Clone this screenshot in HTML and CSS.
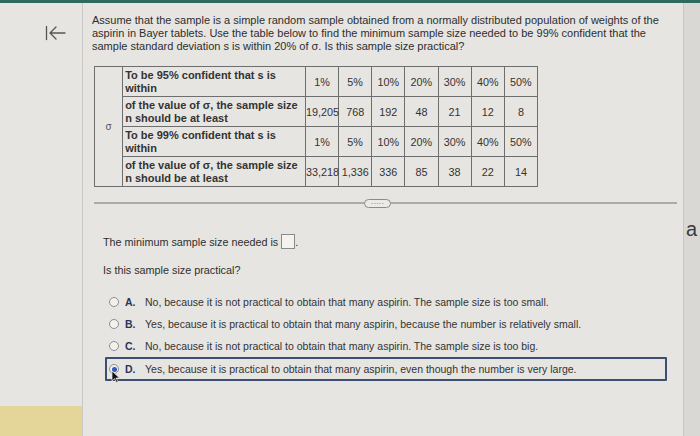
FILE: index.html
```html
<!DOCTYPE html>
<html lang="en">
<head>
<meta charset="utf-8">
<title>Sample size question</title>
<link rel="stylesheet" href="styles.css">
</head>
<body>
<div class="topbar"></div>
<div class="screen">
  <aside class="side">
    <svg class="back" width="22" height="16" viewBox="0 0 22 16" aria-hidden="true">
      <path d="M1.5 1.5V14.5M5 8H20M11 2L5 8L11 14" fill="none" stroke="#555" stroke-width="1.3" stroke-linecap="round" stroke-linejoin="round"/>
    </svg>
    <div class="side-yellow"></div>
  </aside>
  <main class="main">
    <p class="question">Assume that the sample is a simple random sample obtained from a normally distributed population of weights of the<br>aspirin in Bayer tablets. Use the table below to find the minimum sample size needed to be 99% confident that the<br>sample standard deviation s is within 20% of σ. Is this sample size practical?</p>
    <table class="tbl">
      <colgroup>
        <col class="c-sig"><col class="c-lab">
        <col class="c-n"><col class="c-n"><col class="c-n"><col class="c-n"><col class="c-n"><col class="c-n"><col class="c-n">
      </colgroup>
      <tr>
        <td class="sig" rowspan="4">σ</td>
        <td class="lab">To be 95% confident that s is within</td>
        <td>1%</td><td>5%</td><td>10%</td><td>20%</td><td>30%</td><td>40%</td><td>50%</td>
      </tr>
      <tr>
        <td class="lab">of the value of σ, the sample size n should be at least</td>
        <td>19,205</td><td>768</td><td>192</td><td>48</td><td>21</td><td>12</td><td>8</td>
      </tr>
      <tr>
        <td class="lab">To be 99% confident that s is within</td>
        <td>1%</td><td>5%</td><td>10%</td><td>20%</td><td>30%</td><td>40%</td><td>50%</td>
      </tr>
      <tr>
        <td class="lab">of the value of σ, the sample size n should be at least</td>
        <td>33,218</td><td>1,336</td><td>336</td><td>85</td><td>38</td><td>22</td><td>14</td>
      </tr>
    </table>
    <div class="divider"><span class="pill">·····</span></div>
    <section class="answers">
      <p class="line">The minimum sample size needed is <span class="inbox"></span>.</p>
      <p class="line">Is this sample size practical?</p>
      <ul class="options">
        <li class="opt"><span class="radio"></span><b>A.</b><span>No, because it is not practical to obtain that many aspirin. The sample size is too small.</span></li>
        <li class="opt"><span class="radio"></span><b>B.</b><span>Yes, because it is practical to obtain that many aspirin, because the number is relatively small.</span></li>
        <li class="opt"><span class="radio"></span><b>C.</b><span>No, because it is not practical to obtain that many aspirin. The sample size is too big.</span></li>
        <li class="opt selected"><span class="radio on"></span><b>D.</b><span>Yes, because it is practical to obtain that many aspirin, even though the number is very large.</span>
          <svg class="pointer" width="9" height="13" viewBox="0 0 9 13" aria-hidden="true"><path d="M1 1V11L3.5 8.5L5.5 12.5L7 11.8L5 8H8.5Z" fill="#111" stroke="#eee" stroke-width="0.7"/></svg>
        </li>
      </ul>
    </section>
  </main>
  <div class="edge"><span class="edge-a">a</span></div>
</div>
</body>
</html>
```
FILE: styles.css
```css
html, body {
  margin: 0;
  padding: 0;
}
body {
  width: 700px;
  height: 436px;
  overflow: hidden;
  background: #e7e5e1;
  font-family: "Liberation Sans", Arial, sans-serif;
  color: #2e2e2e;
}
.topbar {
  height: 3px;
  background: #2f6b5d;
}
.screen {
  display: flex;
  height: 433px;
}
.side {
  width: 82px;
  flex: none;
  border-right: 1px solid #cbc9c5;
  display: flex;
  flex-direction: column;
  justify-content: space-between;
}
.back {
  margin: 22px 0 0 45px;
}
.side-yellow {
  height: 30px;
  background: #e4d699;
}
.main {
  flex: 1;
  padding: 11px 0 0 9px;
}
.question {
  margin: 0;
  font-size: 11px;
  line-height: 13px;
}
.tbl {
  margin: 13px 0 0 2px;
  border-collapse: collapse;
  table-layout: fixed;
  width: 444px;
  font-size: 10.8px;
  color: #333;
}
.c-sig { width: 28px; }
.c-lab { width: 182px; }
.c-n { width: 33px; }
.tbl td {
  border: 1px solid #6e6e6e;
  height: 27px;
  padding: 0;
  text-align: center;
  vertical-align: middle;
  white-space: nowrap;
}
.tbl td.sig {
  color: #555;
  font-size: 10px;
  text-align: center;
}
.tbl td.lab {
  white-space: normal;
  text-align: left;
  font-weight: bold;
  font-size: 11px;
  line-height: 12.5px;
  padding: 1px 2px 1px 2px;
  color: #333;
}
.divider {
  margin: 15px 6px 0 2px;
  height: 2px;
  background: #adaba6;
  display: flex;
  justify-content: center;
  align-items: center;
}
.pill {
  width: 25px;
  height: 7px;
  border: 1px solid #8d8b87;
  border-radius: 5px;
  background: #eceae6;
  font-size: 8px;
  line-height: 7px;
  color: #666;
  text-align: center;
  margin-left: -16px;
}
.answers {
  padding: 0 0 0 11px;
  font-size: 10.8px;
}
.line {
  margin: 0;
}
.line:first-child {
  margin-top: 30px;
  display: flex;
  align-items: center;
}
.line + .line {
  margin-top: 15px;
}
.inbox {
  display: inline-block;
  width: 12px;
  height: 13px;
  border: 1px solid #8a8a8a;
  background: #f4f3f0;
  margin-left: 3px;
}
.options {
  list-style: none;
  margin: 15px 0 0 0;
  padding: 0 0 0 6px;
}
.opt {
  position: relative;
  display: flex;
  align-items: center;
  height: 22px;
  font-size: 10.5px;
  color: #333;
}
.opt b {
  color: #27355a;
  width: 20px;
  margin-left: 6px;
}
.radio {
  width: 10px;
  height: 10px;
  border-radius: 50%;
  border: 1px solid #8f8f8f;
  background: #f2f1ee;
  box-sizing: border-box;
  flex: none;
  display: flex;
  align-items: center;
  justify-content: center;
}
.radio.on::after {
  content: "";
  width: 5px;
  height: 5px;
  border-radius: 50%;
  background: #3457b8;
}
.selected {
  margin-left: -4px;
  padding-left: 2px;
  width: 556px;
  height: 20px;
  border: 2px solid #3c4f72;
  border-radius: 1px;
}
.pointer {
  position: absolute;
  left: 4px;
  top: 11px;
}
.edge {
  width: 16px;
  flex: none;
  background: #dad8d5;
  border-left: 1px solid #c9c7c3;
  overflow: hidden;
  position: relative;
}
.edge-a {
  position: absolute;
  left: 2px;
  top: 215px;
  font-size: 20px;
  color: #3a3a3a;
}
```
